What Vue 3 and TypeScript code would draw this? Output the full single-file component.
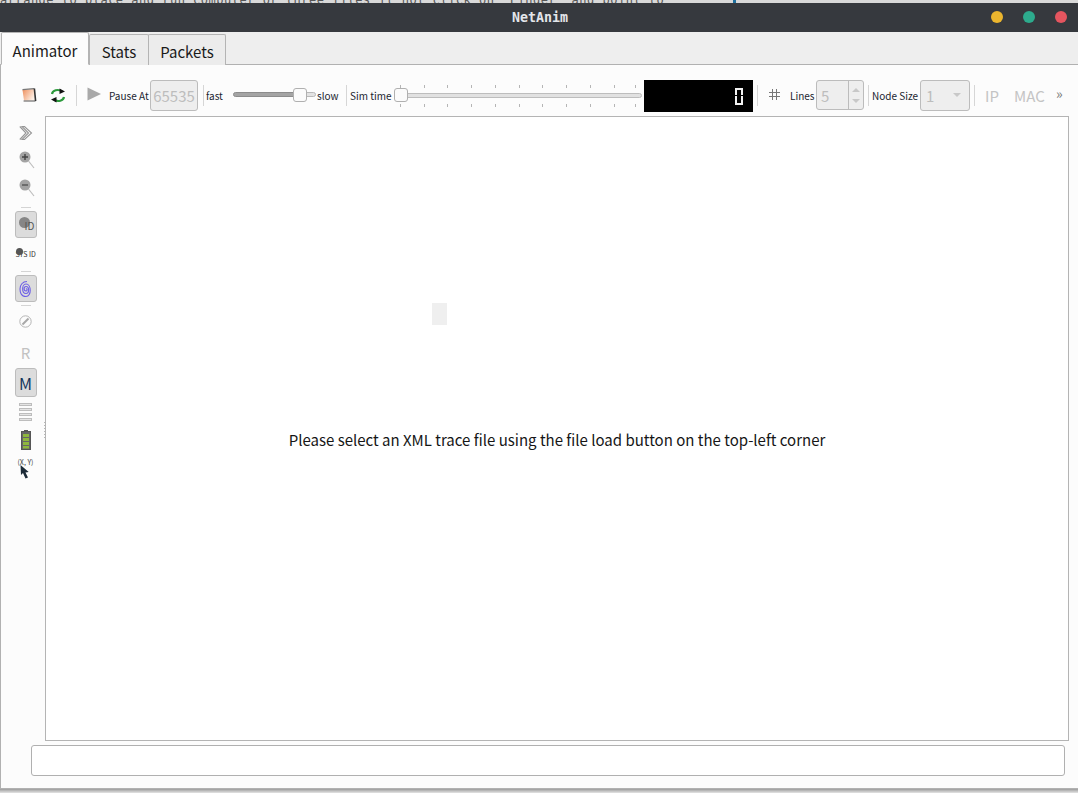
<script setup lang="ts">
const ticks: number[] = [0, 24, 47, 71, 95, 119, 142, 166, 190, 214, 235];
const behind = 'arrange to place and run computer or three files it not click on "Finder" and point to';
</script>

<template>
  <div class="screen">
    <div class="behind">{{ behind }}<i class="caret"></i></div>
    <div class="window">
      <header class="titlebar">
        <span class="title">NetAnim</span>
        <div class="lights">
          <i class="light yellow"></i>
          <i class="light green"></i>
          <i class="light red"></i>
        </div>
      </header>

      <nav class="tabs">
        <div class="tab active">Animator</div>
        <div class="tab second">Stats</div>
        <div class="tab third">Packets</div>
      </nav>

      <section class="pane">
        <div class="toolbar">
          <svg class="ico open" width="16" height="14" viewBox="0 0 16 14">
            <defs>
              <linearGradient id="folder" x1="0" y1="0" x2="1" y2="0.6">
                <stop offset="0" stop-color="#ee8e5c" />
                <stop offset="1" stop-color="#fdf0e6" />
              </linearGradient>
            </defs>
            <path d="M0.5 2 L12 1 L13 12.5 L2 12.5 Z" fill="url(#folder)" />
            <path d="M0.5 1.6 L12.5 0.6" stroke="#777" stroke-width="1.3" fill="none" />
            <path d="M1.6 13 L13.5 13" stroke="#6d6d6d" stroke-width="1.2" fill="none" />
            <path d="M12.4 0.6 L13.6 13" stroke="#333" stroke-width="1.6" fill="none" />
          </svg>
          <svg class="ico reload" width="16" height="17" viewBox="0 0 16 17">
            <path d="M2 7 C2.5 3.5 8 1.5 12 4.5" fill="none" stroke="#2c9a3c" stroke-width="2.2" />
            <path d="M9.5 1.5 L15 4.6 L9.5 7 Z" fill="#111" />
            <path d="M14 10 C13.5 13.5 8 15.5 4 12.5" fill="none" stroke="#2c9a3c" stroke-width="2.2" />
            <path d="M6.5 15.5 L1 12.4 L6.5 10 Z" fill="#111" />
          </svg>
          <span class="sep s-a"></span>
          <svg class="ico play" width="15" height="14" viewBox="0 0 15 14"><path d="M0.5 0.5 L14 7 L0.5 13.5 Z" fill="#a9a9a9" /></svg>
          <span class="lbl pause">Pause At</span>
          <div class="box pausebox">65535</div>
          <span class="sep s-b"></span>
          <span class="lbl fast">fast</span>
          <div class="speed">
            <span class="groove dark"></span>
            <span class="groove light"></span>
            <span class="handle"></span>
          </div>
          <span class="lbl slow">slow</span>
          <span class="sep s-c"></span>
          <span class="lbl sim">Sim time</span>
          <div class="simslider">
            <span v-for="t in ticks" :key="t" class="tick up" :style="{ left: t + 'px' }"></span>
            <span v-for="t in ticks" :key="'d' + t" class="tick down" :style="{ left: t + 'px' }"></span>
            <span class="simgroove"></span>
            <span class="handle simhandle"></span>
          </div>
          <div class="lcd"><span class="digit"></span></div>
          <span class="sep s-d"></span>
          <svg class="hash" width="11" height="11" viewBox="0 0 11 11">
            <path d="M3.5 0 V11 M7.5 0 V11 M0 3.5 H11 M0 7.5 H11" fill="none" stroke="#777" stroke-width="1" />
          </svg>
          <span class="lbl lines">Lines</span>
          <div class="box spin">
            <span>5</span>
            <div class="arrows">
              <i class="up-a"></i>
              <i class="down-a"></i>
            </div>
          </div>
          <span class="sep s-e"></span>
          <span class="lbl node">Node Size</span>
          <div class="box combo">
            <span>1</span>
            <i class="down-a"></i>
          </div>
          <span class="sep s-f"></span>
          <span class="big ip">IP</span>
          <span class="big mac">MAC</span>
          <span class="more">»</span>
        </div>

        <div class="body">
          <aside class="side">
            <svg class="s-chev" width="14" height="14" viewBox="0 0 14 14">
              <path d="M0.8 0.5 L7 7 L0.8 13.5 M3 0.5 H5.5 L12.5 7 L5.5 13.5 H3 L9.5 7 Z" fill="none" stroke="#969696" stroke-width="1.1" />
            </svg>
            <svg class="s-zoom" width="16" height="18" viewBox="0 0 16 18">
              <circle cx="6" cy="6" r="5.5" fill="#a3a3a3" />
              <path d="M3 6 H9 M6 3 V9" stroke="#444" stroke-width="1.4" />
              <path d="M9.5 10 L15 17" stroke="#bdbdbd" stroke-width="1.2" />
            </svg>
            <svg class="s-zoom" width="16" height="18" viewBox="0 0 16 18">
              <circle cx="6" cy="6" r="5.5" fill="#a3a3a3" />
              <path d="M3 6 H9" stroke="#555" stroke-width="1.4" />
              <path d="M9.5 10 L15 17" stroke="#bdbdbd" stroke-width="1.2" />
            </svg>
            <span class="hr h1"></span>
            <div class="toggle t-id">
              <span class="blob"></span>
              <span class="idtxt">ID</span>
            </div>
            <div class="sysid">
              <span class="blob2"></span>
              <span>SYS ID</span>
            </div>
            <span class="hr h2"></span>
            <div class="toggle t-spiral">
              <svg width="14" height="18" viewBox="0 0 14 18">
                <path d="M7 9 C8.5 8 8.5 11 7 11 C4.5 11 4.5 6.5 7 6.5 C10.5 6.5 10.5 13.5 7 13.5 C2.5 13.5 2.5 4 7 4 C12.5 4 12.8 16.5 7 16.5 C2 16.5 1 12 1 9 C1 5 3.5 1.5 8 1.5" fill="none" stroke="#6d5fe6" stroke-width="1.1" />
              </svg>
            </div>
            <span class="hr h3"></span>
            <svg class="s-nope" width="13" height="13" viewBox="0 0 13 13">
              <circle cx="6.5" cy="6.5" r="5.7" fill="none" stroke="#b5b5b5" stroke-width="1" />
              <path d="M3.5 9.5 L9.5 3.5" stroke="#a8a8a8" stroke-width="2" />
            </svg>
            <span class="s-r">R</span>
            <div class="toggle t-m"><span>M</span></div>
            <div class="s-rows">
              <i></i><i></i><i></i><i></i>
            </div>
            <svg class="s-batt" width="10" height="20" viewBox="0 0 10 20">
              <rect x="3" y="0" width="4" height="2" fill="#555" />
              <rect x="0.5" y="1.5" width="9" height="18" fill="#666" stroke="#555" />
              <rect x="2" y="4" width="6" height="3" fill="#8fb73e" />
              <rect x="2" y="8" width="6" height="3" fill="#8fb73e" />
              <rect x="2" y="12" width="6" height="3" fill="#8fb73e" />
              <rect x="2" y="16" width="6" height="2.5" fill="#8fb73e" />
            </svg>
            <div class="xy">(X, Y)</div>
            <svg class="s-cursor" width="9" height="14" viewBox="0 0 9 14">
              <path d="M0.5 0 L1 10 L3 8 L5.5 13.5 L8 12.5 L5.5 7.5 L8.7 7 Z" fill="#1c2b38" />
            </svg>
            <span class="grip"></span>
          </aside>

          <main class="canvas">
            <span class="placeholder"></span>
            <p class="message">Please select an XML trace file using the file load button on the top-left corner</p>
          </main>
        </div>

        <div class="footer">
          <div class="inputbox"></div>
        </div>
      </section>
    </div>
    <div class="shadow"></div>
  </div>
</template>

<style>
html,
body {
  margin: 0;
  padding: 0;
  background: #fff;
}
</style>

<style scoped>
.screen {
  width: 1078px;
  height: 793px;
  overflow: hidden;
  display: flex;
  flex-direction: column;
  font-family: "Noto Sans CJK SC", "Noto Sans", sans-serif;
  color: #1a1a1a;
  background: #fff;
}
.behind {
  height: 3px;
  line-height: 1px;
  overflow: hidden;
  white-space: nowrap;
  font-family: "DejaVu Sans Mono", monospace;
  font-size: 12px;
  letter-spacing: 0.5px;
  color: #555;
  background: #d9d9d9;
  flex: none;
  position: relative;
}
.caret {
  position: absolute;
  left: 733px;
  top: 0;
  width: 3px;
  height: 3px;
  background: #1d6f9e;
}
.window {
  flex: none;
  height: 786px;
  display: flex;
  flex-direction: column;
}
.titlebar {
  flex: none;
  height: 29px;
  background: #36393e;
  display: flex;
  align-items: center;
  justify-content: center;
  position: relative;
}
.title {
  font-family: "DejaVu Sans Mono", monospace;
  font-weight: 700;
  font-size: 13.3px;
  color: #e4e6ea;
  margin-left: 2px;
}
.lights {
  position: absolute;
  right: 11px;
  top: 8px;
  display: flex;
  gap: 20px;
}
.light {
  width: 12px;
  height: 12px;
  border-radius: 50%;
}
.yellow { background: #ebb52e; }
.green { background: #2dab8d; }
.red { background: #e5555f; }

.tabs {
  flex: none;
  height: 33px;
  background: #eeeeee;
  display: flex;
  align-items: flex-end;
  box-sizing: border-box;
  border-bottom: 1px solid #b1b1b1;
  padding-left: 1px;
}
.tab {
  box-sizing: border-box;
  font-size: 15px;
  border: 1px solid #b4b4b4;
  border-bottom: none;
  border-radius: 2px 2px 0 0;
  background: #ececec;
  height: 31px;
  line-height: 33px;
  margin-bottom: -1px;
  text-align: center;
}
.tab.active {
  width: 88px;
  height: 33px;
  background: #fcfcfc;
  border-bottom: 1px solid #fcfcfc;
  line-height: 35px;
  position: relative;
  z-index: 1;
}
.tab.second {
  width: 60px;
}
.tab.third {
  width: 78px;
  margin-left: -1px;
}

.pane {
  flex: 1;
  min-height: 0;
  background: #fcfcfc;
  display: flex;
  flex-direction: column;
  box-sizing: border-box;
  border-left: 1px solid #b1b1b1;
  border-bottom: 1px solid #b1b1b1;
}
.toolbar {
  flex: none;
  height: 51px;
  display: flex;
  align-items: center;
  padding-top: 9px;
  box-sizing: border-box;
  position: relative;
}
.ico { flex: none; }
.open { margin-left: 21px; }
.reload { margin-left: 12px; }
.sep {
  flex: none;
  width: 1px;
  height: 21px;
  background: #d6d6d6;
}
.s-a { margin-left: 10px; }
.play { margin-left: 10px; margin-top: -3px; }
.lbl {
  font-size: 10px;
  color: #1b2530;
  white-space: nowrap;
  flex: none;
  margin-top: 1px;
}
.pause { margin-left: 7px; width: 41px; }
.box {
  flex: none;
  box-sizing: border-box;
  border: 1px solid #bcbcbc;
  border-radius: 3px;
  background: #eeeeee;
  color: #bdbdbd;
  font-size: 15px;
  height: 31px;
}
.pausebox {
  width: 48px;
  line-height: 29px;
  text-align: center;
}
.s-b { margin-left: 5px; }
.fast { margin-left: 2px; width: 24px; }
.speed {
  flex: none;
  position: relative;
  width: 83px;
  height: 14px;
  margin-left: 3px;
}
.groove {
  position: absolute;
  top: 4px;
  height: 5px;
  box-sizing: border-box;
  border-radius: 3px;
}
.groove.dark {
  left: 0;
  width: 64px;
  background: #a4a4a4;
  border: 1px solid #8c8c8c;
}
.groove.light {
  left: 62px;
  width: 21px;
  background: #e2e2e2;
  border: 1px solid #b8b8b8;
}
.handle {
  position: absolute;
  box-sizing: border-box;
  width: 14px;
  height: 14px;
  border: 1px solid #b0b0b0;
  border-radius: 3px;
  background: #fbfbfb;
  top: 0;
  left: 60px;
}
.slow { margin-left: 1px; width: 26px; }
.s-c { margin-left: 3px; }
.sim { margin-left: 3px; width: 43px; }
.simslider {
  flex: none;
  position: relative;
  width: 249px;
  height: 24px;
}
.simgroove {
  position: absolute;
  left: 5px;
  right: 0;
  top: 10px;
  height: 5px;
  box-sizing: border-box;
  background: #e1e1e1;
  border: 1px solid #bdbdbd;
  border-radius: 3px;
}
.simhandle {
  left: 1px;
  top: 5px;
  z-index: 1;
}
.tick {
  position: absolute;
  width: 1px;
  height: 3px;
  background: #b5b5b5;
  margin-left: 7px;
}
.tick.up { top: 2px; }
.tick.down { top: 21px; }
.lcd {
  flex: none;
  width: 109px;
  height: 32px;
  background: #000;
  margin-left: 2px;
  margin-top: 2px;
  position: relative;
}
.digit {
  position: absolute;
  right: 10px;
  top: 8px;
  width: 8px;
  height: 17px;
  box-sizing: border-box;
  border: 2px solid #f2f2f2;
}
.digit::after {
  content: "";
  position: absolute;
  left: -2px;
  right: -2px;
  top: 5px;
  height: 1px;
  background: #000;
}
.s-d { margin-left: 4px; }
.hash {
  flex: none;
  width: 11px;
  margin-left: 11px;
  margin-top: -1px;
}
.lines { margin-left: 10px; width: 26px; }
.spin {
  width: 48px;
  display: flex;
  padding-left: 4px;
  line-height: 29px;
  justify-content: space-between;
  height: 30px;
}
.arrows {
  width: 14px;
  border-left: 1px solid #bcbcbc;
  display: flex;
  flex-direction: column;
  align-items: center;
  justify-content: center;
  gap: 7px;
}
.up-a {
  width: 0;
  height: 0;
  border-left: 4px solid transparent;
  border-right: 4px solid transparent;
  border-bottom: 4px solid #c8c8c8;
}
.down-a {
  width: 0;
  height: 0;
  border-left: 4px solid transparent;
  border-right: 4px solid transparent;
  border-top: 4px solid #c8c8c8;
}
.s-e { margin-left: 4px; }
.node { margin-left: 3px; width: 47px; }
.combo {
  width: 50px;
  height: 31px;
  margin-left: 1px;
  display: flex;
  align-items: center;
  justify-content: space-between;
  padding: 0 8px 0 5px;
}
.s-f { margin-left: 4px; }
.big {
  flex: none;
  font-size: 15px;
  color: #c4c4c4;
}
.ip { margin-left: 10px; width: 14px; }
.mac { margin-left: 15px; width: 32px; }
.more {
  flex: none;
  font-size: 14px;
  color: #777;
  margin-left: 10px;
  margin-top: -4px;
}

.body {
  flex: 1;
  min-height: 0;
  display: flex;
}
.side {
  flex: none;
  width: 44px;
  position: relative;
  display: flex;
  flex-direction: column;
  align-items: center;
  padding-left: 5px;
  box-sizing: border-box;
}
.s-chev { margin-top: 10px; flex: none; }
.s-zoom { margin-top: 10px; flex: none; margin-left: 2px; }
.s-chev + .s-zoom { margin-top: 11px; }
.hr {
  flex: none;
  width: 10px;
  height: 1px;
  background: #d4d4d4;
}
.h1 { margin-top: 10px; }
.h2 { margin-top: 10px; }
.h3 { margin-top: 3px; }
.toggle {
  flex: none;
  box-sizing: border-box;
  width: 22px;
  height: 27px;
  border: 1px solid #bcbcbc;
  border-radius: 3px;
  background: #dcdcdc;
  position: relative;
}
.t-id { margin-top: 3px; }
.blob {
  position: absolute;
  left: 3px;
  top: 5px;
  width: 11px;
  height: 11px;
  border-radius: 50%;
  background: #868686;
}
.idtxt {
  position: absolute;
  left: 9px;
  top: 8px;
  font-size: 10px;
  line-height: 12px;
  color: #555;
}
.sysid {
  flex: none;
  position: relative;
  width: 20px;
  height: 14px;
  margin-top: 9px;
  font-size: 7px;
  line-height: 14px;
  text-align: right;
  color: #333;
  white-space: nowrap;
}
.blob2 {
  position: absolute;
  left: 0;
  top: 1px;
  width: 7px;
  height: 7px;
  border-radius: 50%;
  background: #555;
}
.t-spiral {
  margin-top: 3px;
  display: flex;
  align-items: center;
  justify-content: center;
}
.s-nope { margin-top: 9px; flex: none; }
.s-r {
  flex: none;
  margin-top: 15px;
  height: 20px;
  line-height: 20px;
  font-size: 15px;
  color: #c2c2c2;
}
.t-m {
  margin-top: 5px;
  height: 29px;
  display: flex;
  align-items: center;
  justify-content: center;
  font-size: 16px;
  color: #12345a;
}
.s-rows {
  flex: none;
  margin-top: 6px;
  display: flex;
  flex-direction: column;
  gap: 2px;
}
.s-rows i {
  display: block;
  box-sizing: border-box;
  width: 13px;
  height: 3px;
  background: #e4e4e4;
  border: 1px solid #bdbdbd;
}
.s-batt { margin-top: 9px; flex: none; }
.xy {
  flex: none;
  margin-top: 8px;
  font-size: 7px;
  line-height: 8px;
  color: #444;
  white-space: nowrap;
}
.s-cursor {
  flex: none;
  margin-top: -1px;
  margin-left: -2px;
}
.grip {
  position: absolute;
  right: 0;
  top: 306px;
  width: 1px;
  height: 17px;
  background: repeating-linear-gradient(to bottom, #b9b9b9 0 1px, transparent 1px 3px);
}
.canvas {
  flex: none;
  width: 1024px;
  height: 625px;
  box-sizing: border-box;
  border: 1px solid #b4b4b4;
  background: #fff;
  position: relative;
}
.placeholder {
  position: absolute;
  left: 386px;
  top: 186px;
  width: 15px;
  height: 22px;
  background: #efefef;
}
.message {
  position: absolute;
  left: 0;
  right: 0;
  margin: 0;
  top: 313px;
  text-align: center;
  font-size: 15px;
  line-height: 20px;
  color: #161616;
}
.footer {
  flex: none;
  padding: 4px 0 0 30px;
  height: 47px;
  box-sizing: border-box;
}
.inputbox {
  box-sizing: border-box;
  width: 1034px;
  height: 31px;
  border: 1px solid #b0b0b0;
  border-radius: 3px;
  background: #fff;
}
.shadow {
  flex: 1;
  background: linear-gradient(to bottom, #9c9c9c, #e4e4e4);
}
</style>
